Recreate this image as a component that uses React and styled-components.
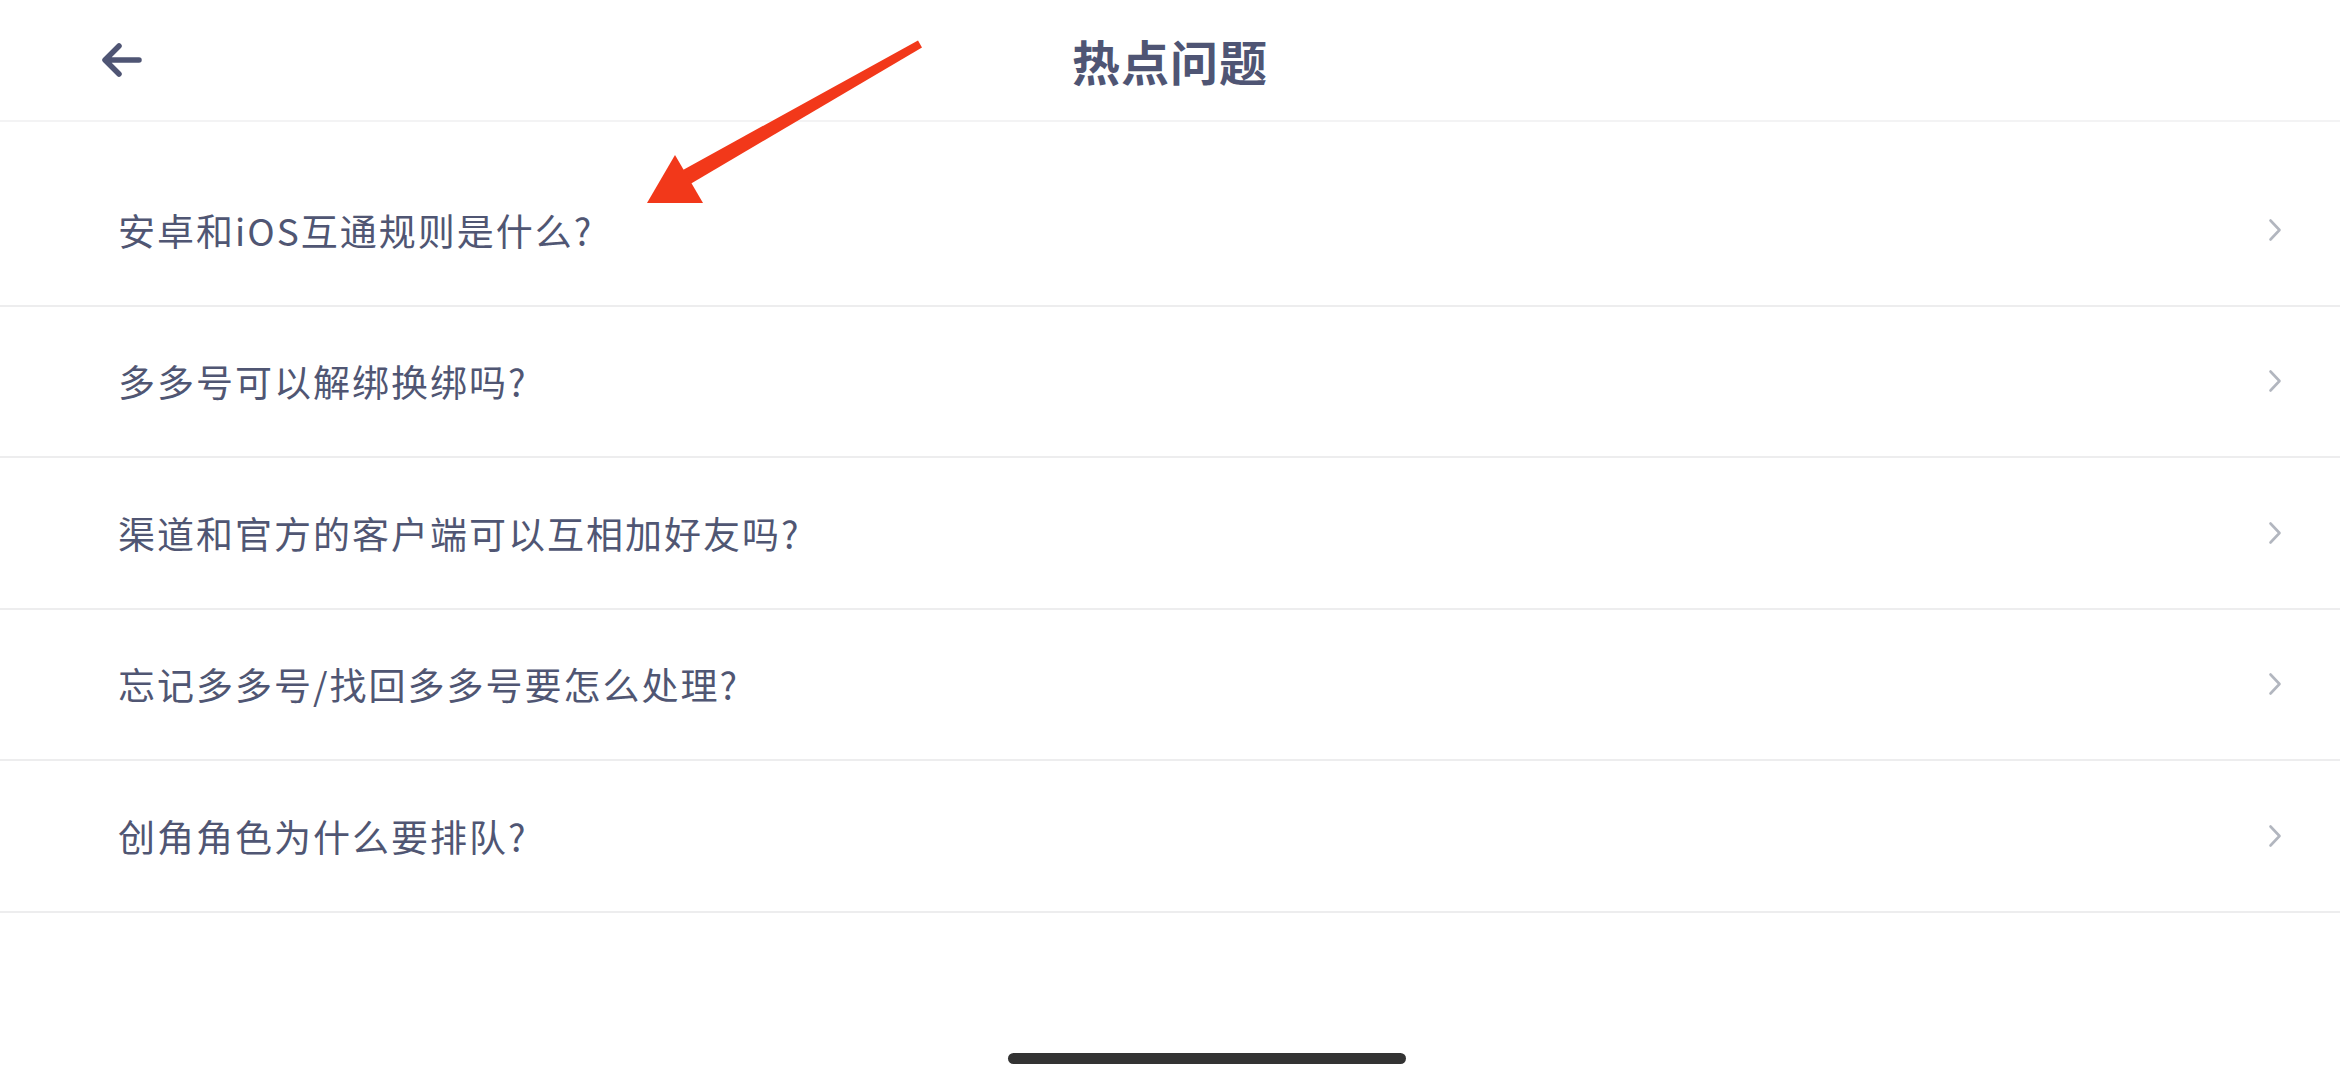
import React from "react";
import styled, { createGlobalStyle } from "styled-components";

const Global = createGlobalStyle`
  html, body { margin: 0; padding: 0; background: #ffffff; }
  body { font-family: "Noto Sans CJK SC", "Noto Sans", sans-serif; }
`;

const Page = styled.div`
  position: relative;
  width: 2340px;
  height: 1080px;
  background: #ffffff;
  overflow: hidden;
  display: flex;
  flex-direction: column;
`;

const Header = styled.header`
  box-sizing: border-box;
  height: 122px;
  border-bottom: 2px solid #f3f3f4;
  display: grid;
  grid-template-columns: 200px 1fr 200px;
  align-items: center;
`;

const BackButton = styled.button`
  border: none;
  background: none;
  padding: 0;
  margin-left: 101px;
  width: 42px;
  height: 36px;
  display: flex;
  align-items: center;
  justify-content: center;
  cursor: pointer;
`;

const Title = styled.h1`
  margin: 0;
  text-align: center;
  font-size: 48px;
  font-weight: 700;
  color: #4f5574;
  letter-spacing: 1px;
`;

const List = styled.ul`
  list-style: none;
  margin: 0;
  padding: 33px 0 0;
`;

const Row = styled.li`
  box-sizing: border-box;
  height: 151.5px;
  border-bottom: 2px solid #ededee;
  display: flex;
  align-items: center;
  justify-content: space-between;
  padding: 0 58px 0 118px;
`;

const Question = styled.span`
  font-size: 37px;
  letter-spacing: 2px;
  color: #505673;
  font-weight: 400;
`;

const Chevron = styled.svg`
  width: 14px;
  height: 24px;
  flex: none;
`;

const HomeIndicator = styled.div`
  position: absolute;
  left: 1008px;
  top: 1053px;
  width: 398px;
  height: 11px;
  border-radius: 6px;
  background: #333333;
`;

const Annotation = styled.svg`
  position: absolute;
  left: 640px;
  top: 35px;
  width: 290px;
  height: 175px;
  pointer-events: none;
`;

const questions = [
  "安卓和iOS互通规则是什么?",
  "多多号可以解绑换绑吗?",
  "渠道和官方的客户端可以互相加好友吗?",
  "忘记多多号/找回多多号要怎么处理?",
  "创角角色为什么要排队?",
];

export default function App() {
  return (
    <Page>
      <Global />
      <Header>
        <BackButton aria-label="返回">
          <svg width="42" height="36" viewBox="0 0 42 36" fill="none">
            <path
              d="M38 18H5M18 4L4 18l14 14"
              stroke="#4f5574"
              strokeWidth="5.5"
              strokeLinecap="round"
              strokeLinejoin="round"
            />
          </svg>
        </BackButton>
        <Title>热点问题</Title>
        <div />
      </Header>
      <List>
        {questions.map((q) => (
          <Row key={q}>
            <Question>{q}</Question>
            <Chevron viewBox="0 0 14 24" fill="none">
              <path
                d="M2.5 2.5l9 9.5-9 9.5"
                stroke="#b2b6bf"
                strokeWidth="2.6"
                strokeLinecap="round"
                strokeLinejoin="round"
              />
            </Chevron>
          </Row>
        ))}
      </List>
      <Annotation viewBox="640 35 290 175">
        <polygon
          points="922,47.5 918,40.5 673,175.5 681,189.5"
          fill="#f2381a"
        />
        <polygon points="647,203 703,203 675,155" fill="#f2381a" />
      </Annotation>
      <HomeIndicator />
    </Page>
  );
}
